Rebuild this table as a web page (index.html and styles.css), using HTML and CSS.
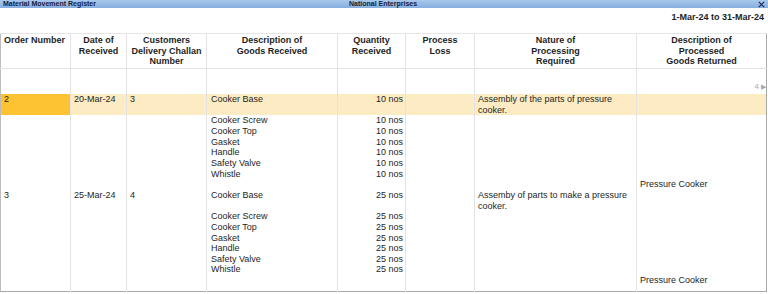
FILE: index.html
```html
<!DOCTYPE html>
<html>
<head>
<meta charset="utf-8">
<link rel="stylesheet" href="styles.css">
</head>
<body>
<div class="titlebar">
  <span class="t-left">Material Movement Register</span>
  <span class="t-mid">National Enterprises</span>
  <svg class="t-close" width="7" height="7" viewBox="0 0 7 7"><path d="M0.8 0.8 L6.2 6.2 M6.2 0.8 L0.8 6.2" stroke="#1a2a55" stroke-width="1.2" fill="none"/></svg>
</div>
<div class="period">1-Mar-24 to 31-Mar-24</div>
<table class="reg">
  <colgroup>
    <col class="c1"><col class="c2"><col class="c3"><col class="c4">
    <col class="c5"><col class="c6"><col class="c7"><col class="c8">
  </colgroup>
  <thead>
    <tr>
      <th class="left">Order Number</th>
      <th>Date of<br>Received</th>
      <th>Customers<br>Delivery Challan<br>Number</th>
      <th>Description of<br>Goods Received</th>
      <th>Quantity<br>Received</th>
      <th>Process<br>Loss</th>
      <th>Nature of<br>Processing<br>Required</th>
      <th>Description of<br>Processed<br>Goods Returned</th>
    </tr>
  </thead>
  <tbody>
    <tr class="blank">
      <td></td><td></td><td></td><td></td><td></td><td></td><td></td>
      <td class="pager"><span>4</span><span class="tri">▶</span></td>
    </tr>
    <tr class="sel">
      <td class="cur">2</td>
      <td>20-Mar-24</td>
      <td>3</td>
      <td>Cooker Base</td>
      <td class="num">10 nos</td>
      <td></td>
      <td>Assembly of the parts of pressure cooker.</td>
      <td></td>
    </tr>
    <tr>
      <td></td><td></td><td></td>
      <td>Cooker Screw<br>Cooker Top<br>Gasket<br>Handle<br>Safety Valve<br>Whistle</td>
      <td class="num">10 nos<br>10 nos<br>10 nos<br>10 nos<br>10 nos<br>10 nos</td>
      <td></td><td></td><td></td>
    </tr>
    <tr>
      <td></td><td></td><td></td><td></td><td></td><td></td><td></td>
      <td>Pressure Cooker</td>
    </tr>
    <tr>
      <td>3</td>
      <td>25-Mar-24</td>
      <td>4</td>
      <td>Cooker Base</td>
      <td class="num">25 nos</td>
      <td></td>
      <td>Assemby of parts to make a pressure cooker.</td>
      <td></td>
    </tr>
    <tr>
      <td></td><td></td><td></td>
      <td>Cooker Screw<br>Cooker Top<br>Gasket<br>Handle<br>Safety Valve<br>Whistle</td>
      <td class="num">25 nos<br>25 nos<br>25 nos<br>25 nos<br>25 nos<br>25 nos</td>
      <td></td><td></td><td></td>
    </tr>
    <tr class="last">
      <td></td><td></td><td></td><td></td><td></td><td></td><td></td>
      <td>Pressure Cooker</td>
    </tr>
  </tbody>
</table>
</body>
</html>
```
FILE: styles.css
```css
html, body {
  margin: 0;
  padding: 0;
  background: #ffffff;
}
body {
  font-family: "Liberation Sans", Arial, sans-serif;
  font-size: 9px;
  color: #1e1e1e;
  width: 768px;
  overflow: hidden;
}
.titlebar {
  height: 8px;
  background: linear-gradient(#a9c8ec, #86aedd);
  display: flex;
  align-items: center;
  position: relative;
  font-size: 7px;
  font-weight: bold;
  color: #16213a;
  line-height: 8px;
}
.t-left {
  padding-left: 3px;
}
.t-mid {
  position: absolute;
  left: 349px;
  top: 0;
}
.t-close {
  margin-left: auto;
  margin-right: 3px;
  display: block;
}
.period {
  text-align: right;
  font-weight: bold;
  line-height: 10.6px;
  padding: 4px 4px 0 0;
  height: 21px;
}
.reg {
  border-collapse: collapse;
  table-layout: fixed;
  width: 766px;
  line-height: 10.65px;
  border-bottom: 1px solid #a8a8a8;
  border-right: 1px solid #a8a8a8;
  border-left: 1px solid #bdbdbd;
}
.c1 { width: 70px; }
.c2 { width: 56px; }
.c3 { width: 80px; }
.c4 { width: 131px; }
.c5 { width: 68px; }
.c6 { width: 69px; }
.c7 { width: 162px; }
.c8 { width: 130px; }
.reg th {
  font-weight: bold;
  vertical-align: top;
  text-align: center;
  padding: 1px 2px 1px;
  border-top: 1px solid #e6e6e6;
  border-bottom: 1px solid #e3e3e3;
  border-left: 1px solid #e3e3e3;
}
.reg th.left {
  text-align: left;
  padding-left: 3px;
  border-left: none;
}
.reg td {
  vertical-align: top;
  padding: 0 3px;
  border-left: 1px solid #e3e3e3;
  white-space: normal;
}
.reg td:first-child {
  border-left: none;
}
.reg td:nth-child(4) {
  padding-left: 4px;
}
.reg td.num {
  text-align: right;
  padding-right: 2px;
}
.blank td {
  height: 22px;
  padding: 0;
}
.pager {
  vertical-align: bottom !important;
  text-align: right;
  color: #a9a9a9;
  font-size: 8px;
  line-height: 8px;
  padding: 0 0 3px 0 !important;
}
.pager .tri {
  font-size: 7px;
  margin-left: 2px;
}
.sel td {
  background: #fcebc3;
}
.sel td.cur {
  background: #fdc332;
}
.last td {
  padding-bottom: 5px;
}
```
